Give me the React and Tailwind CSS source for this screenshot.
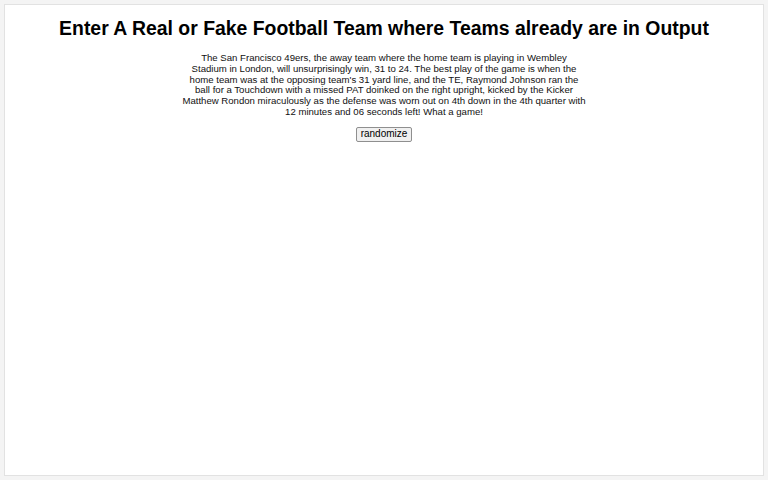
import React from "react";

// story text, broken into the lines it wraps to at this column width
const storyLines = [
  "The San Francisco 49ers, the away team where the home team is playing in Wembley",
  "Stadium in London, will unsurprisingly win, 31 to 24. The best play of the game is when the",
  "home team was at the opposing team's 31 yard line, and the TE, Raymond Johnson ran the",
  "ball for a Touchdown with a missed PAT doinked on the right upright, kicked by the Kicker",
  "Matthew Rondon miraculously as the defense was worn out on 4th down in the 4th quarter with",
  "12 minutes and 06 seconds left! What a game!",
];

export default function App() {
  return (
    <div className="min-h-screen bg-[#f4f4f4] p-[4px] font-['Liberation_Sans',Arial,sans-serif]">
      <div className="h-[472px] bg-white border border-[#e2e2e2] flex flex-col items-center">
        <h1 className="mt-[11px] text-[19.4px] leading-[24px] font-bold text-black">
          Enter A Real or Fake Football Team where Teams already are in Output
        </h1>
        <p className="mt-[13px] w-[420px] text-center text-[9.6px] leading-[10.8px] text-[#111]">
          {storyLines.map((line, i) => (
            <React.Fragment key={i}>
              {line}
              {i < storyLines.length - 1 && <br />}
            </React.Fragment>
          ))}
        </p>
        <button className="mt-[9px] px-[4px] h-[15px] text-[10px] leading-[12px] text-black bg-[#f0f0f0] border border-[#8f8f8f] rounded-[2px]">
          randomize
        </button>
      </div>
    </div>
  );
}
